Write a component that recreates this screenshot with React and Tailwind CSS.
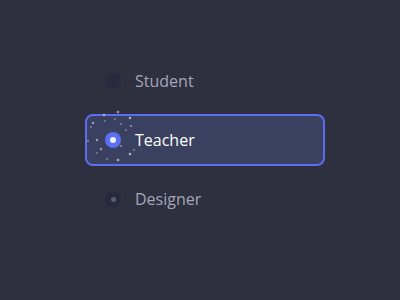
import { useState } from "react";

const OPTIONS = ["Student", "Teacher", "Designer"];

// little sparkle dots around the selected radio (page coords)
const SPARKS = [
  [104, 115, 1.2, 0.8], [118, 112, 1.3, 0.7], [93, 123, 1.2, 0.7], [130, 118, 1.3, 0.8],
  [131, 126, 1.1, 0.6], [105, 121, 0.9, 0.5], [115, 119, 0.9, 0.5], [121, 124, 1, 0.5],
  [126, 130, 0.9, 0.5], [97, 140, 1.2, 0.7], [88, 141, 1, 0.6], [101, 149, 1.2, 0.7],
  [130, 154, 1.3, 0.8], [118, 160, 1.3, 0.8], [107, 159, 1, 0.5], [97, 153, 0.9, 0.5],
  [121, 146, 1, 0.6], [134, 150, 0.9, 0.6], [91, 127, 1, 0.5],
];

function Radio({ state }) {
  if (state === "checked") {
    return (
      <span className="w-4 h-4 rounded-full bg-[#5b6ff2] flex items-center justify-center">
        <span className="w-[6px] h-[6px] rounded-full bg-[#eef0ff]" />
      </span>
    );
  }
  return (
    <span className="w-4 h-4 rounded-full bg-[#272a3c] flex items-center justify-center">
      {state === "hover" && <span className="w-[5px] h-[5px] rounded-full bg-[#5a5e74]" />}
    </span>
  );
}

export default function App() {
  const [selected, setSelected] = useState("Teacher");

  return (
    <div
      className="relative w-full h-[300px] bg-[#2e3040] pt-[55px] overflow-hidden"
      style={{ fontFamily: '"Open Sans", "Noto Sans", sans-serif' }}
    >
      <div className="flex flex-col gap-[7px] ml-[85px] w-[240px]">
        {OPTIONS.map((opt) => {
          const active = opt === selected;
          return (
            <button
              key={opt}
              onClick={() => setSelected(opt)}
              className={
                "flex items-center h-[52px] pl-[18px] gap-[14px] rounded-[8px] border-2 text-left " +
                (active
                  ? "bg-[#3a4160] border-[#5a6cf0]"
                  : "border-transparent")
              }
            >
              <Radio state={active ? "checked" : opt === "Designer" ? "hover" : "empty"} />
              <span
                className={
                  active
                    ? "text-[16px] text-white"
                    : "text-[16px] text-[#a3a6b6]"
                }
              >
                {opt}
              </span>
            </button>
          );
        })}
      </div>
      <svg className="absolute left-0 top-0 pointer-events-none" width="400" height="300">
        {SPARKS.map(([x, y, r, o], i) => (
          <circle key={i} cx={x} cy={y} r={r} fill="#c8cbe0" opacity={o} />
        ))}
      </svg>
    </div>
  );
}
